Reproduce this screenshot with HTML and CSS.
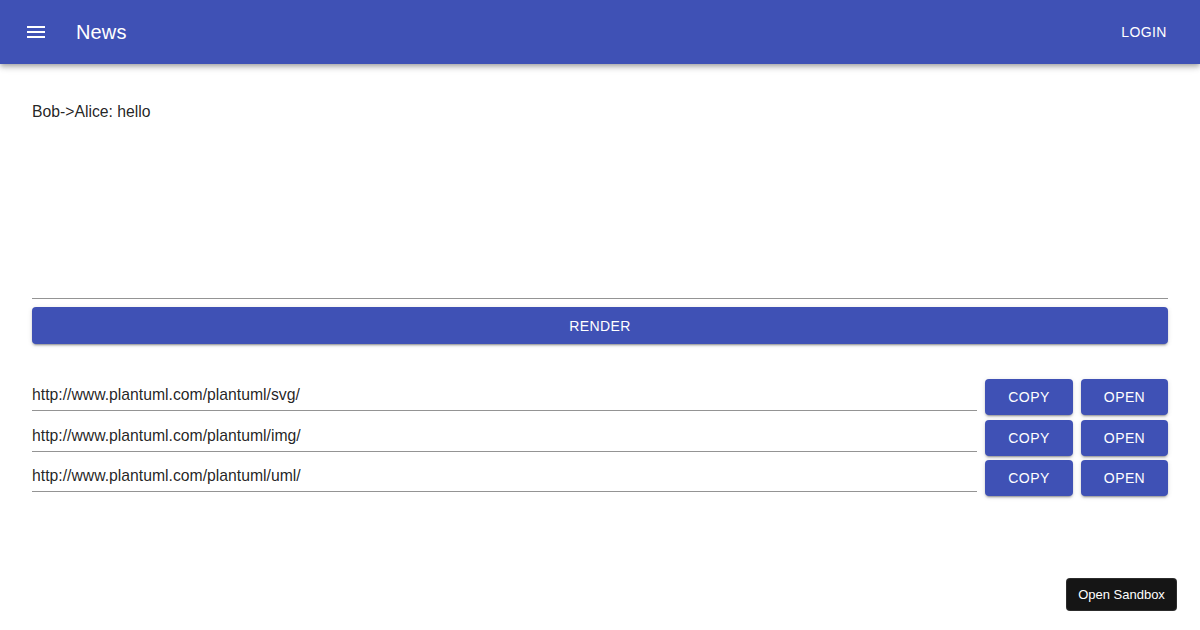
FILE: index.html
```html
<!DOCTYPE html>
<html>
<head>
<meta charset="utf-8">
<link rel="stylesheet" href="styles.css">
</head>
<body>
<header class="appbar">
  <button class="icon-btn" aria-label="menu">
    <svg viewBox="0 0 24 24" width="24" height="24"><path fill="#fff" d="M3 18h18v-2H3v2zm0-5h18v-2H3v2zm0-7v2h18V6H3z"/></svg>
  </button>
  <h1 class="title">News</h1>
  <div class="spacer"></div>
  <button class="text-btn">Login</button>
</header>
<main class="main">
  <div class="textarea-field">
    <div class="textarea-text">Bob-&gt;Alice: hello</div>
  </div>
  <button class="btn btn-full">Render</button>
  <div class="url-list">
    <div class="url-row">
      <div class="url-field"><span>http://www.plantuml.com/plantuml/svg/</span></div>
      <button class="btn btn-copy">Copy</button>
      <button class="btn btn-open">Open</button>
    </div>
    <div class="url-row">
      <div class="url-field"><span>http://www.plantuml.com/plantuml/img/</span></div>
      <button class="btn btn-copy">Copy</button>
      <button class="btn btn-open">Open</button>
    </div>
    <div class="url-row">
      <div class="url-field"><span>http://www.plantuml.com/plantuml/uml/</span></div>
      <button class="btn btn-copy">Copy</button>
      <button class="btn btn-open">Open</button>
    </div>
  </div>
</main>
<a class="sandbox">Open Sandbox</a>
</body>
</html>
```
FILE: styles.css
```css
* { box-sizing: border-box; }
html, body { margin: 0; padding: 0; background: #fff; }
body {
  font-family: "Liberation Sans", Arial, sans-serif;
  color: rgba(0,0,0,0.87);
  width: 1200px;
  height: 630px;
  overflow: hidden;
  position: relative;
}
button { font-family: inherit; border: 0; cursor: pointer; }

.appbar {
  height: 64px;
  background: #3f51b5;
  color: #fff;
  display: flex;
  align-items: center;
  padding: 0 24px;
  box-shadow: 0 2px 4px -1px rgba(0,0,0,0.2), 0 4px 5px 0 rgba(0,0,0,0.14), 0 1px 10px 0 rgba(0,0,0,0.12);
  position: relative;
  z-index: 2;
}
.icon-btn {
  background: transparent;
  padding: 12px;
  margin-left: -12px;
  margin-right: 16px;
  width: 48px;
  height: 48px;
  display: flex;
}
.title {
  margin: 0;
  font-size: 20px;
  font-weight: 400;
  letter-spacing: 0.0075em;
  line-height: 1.6;
}
.spacer { flex: 1; }
.text-btn {
  background: transparent;
  color: #fff;
  font-size: 14px;
  font-weight: 400;
  text-transform: uppercase;
  letter-spacing: 0.02857em;
  min-width: 64px;
  padding: 6px 8px;
  line-height: 1.75;
}

.main {
  padding: 32px 32px 0;
}
.textarea-field {
  height: 203px;
  border-bottom: 1px solid rgba(0,0,0,0.42);
  padding-top: 6px;
}
.textarea-text {
  font-size: 15.75px;
  line-height: 19px;
  color: rgba(0,0,0,0.87);
}

.btn {
  background: #3f51b5;
  color: #fff;
  font-size: 14px;
  font-weight: 400;
  text-transform: uppercase;
  letter-spacing: 0.02857em;
  border-radius: 4px;
  height: 36px;
  padding: 6px 16px;
  line-height: 24px;
  box-shadow: 0 3px 1px -2px rgba(0,0,0,0.2), 0 2px 2px 0 rgba(0,0,0,0.14), 0 1px 5px 0 rgba(0,0,0,0.12);
}
.btn-full {
  display: block;
  width: 100%;
  margin-top: 8px;
  height: 37px;
}

.url-list {
  margin-top: 35px;
  display: flex;
  flex-direction: column;
  gap: 4.5px;
}
.url-row {
  display: flex;
  align-items: flex-start;
  gap: 8px;
}
.url-field {
  flex: 1;
  height: 32px;
  border-bottom: 1px solid rgba(0,0,0,0.42);
  padding: 6px 0 7px;
  font-size: 15.75px;
  line-height: 19px;
}
.btn-copy { width: 88px; height: 36px; }
.btn-open { width: 87px; height: 36px; }

.sandbox {
  position: absolute;
  left: 1066px;
  top: 578px;
  width: 111px;
  height: 33px;
  background: #151515;
  color: #fff;
  border-radius: 4px;
  font-size: 13px;
  display: flex;
  align-items: center;
  justify-content: center;
  border: 1px solid rgba(255,255,255,0.1);
}
```
